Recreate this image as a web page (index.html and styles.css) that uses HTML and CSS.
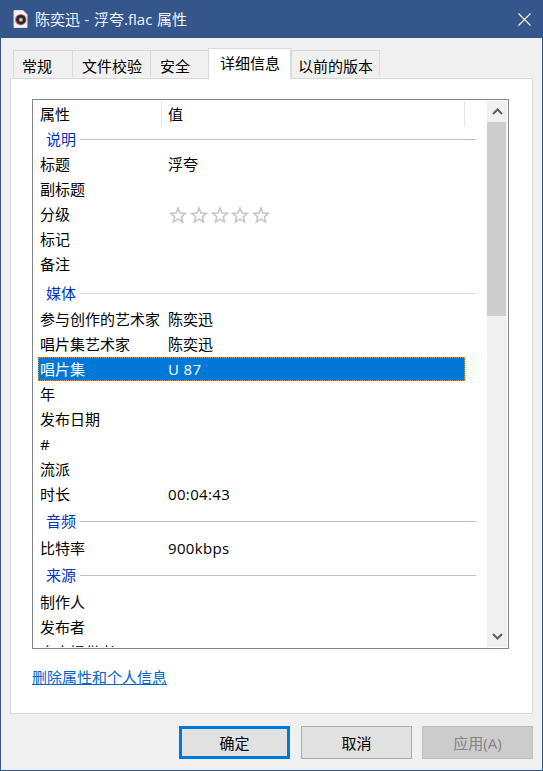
FILE: index.html
```html
<!DOCTYPE html>
<html lang="zh">
<head>
    <meta charset="utf-8">
    <title>陈奕迅 - 浮夸.flac 属性</title>
    <link rel="stylesheet" href="styles.css">
</head>
<body>
    <div class="window">
        <div class="titlebar">
            <svg class="file-icon" width="16" height="18" viewBox="0 0 16 18">
                <path d="M1 .5h9l4 4v13H1z" fill="#f6f6f6" stroke="#d8dce4"/>
                <circle cx="7.7" cy="9.7" r="5.8" fill="#d8735a"/>
                <circle cx="7.9" cy="9.7" r="4.8" fill="#2b2530"/>
                <circle cx="7.9" cy="9.7" r="2.2" fill="#8d8a90"/>
                <circle cx="7.9" cy="9.7" r="1" fill="#f2f2f2"/>
            </svg>
            <span class="title">陈奕迅 - 浮夸.flac 属性</span>
            <svg class="close-icon" width="13" height="13" viewBox="0 0 13 13">
                <path d="M.5.5l12 12M12.5.5l-12 12" stroke="#fff" stroke-width="1.1" fill="none"/>
            </svg>
        </div>

        <div class="body">
            <div class="tabs">
                <div class="tab tab-1">常规</div>
                <div class="tab tab-2">文件校验</div>
                <div class="tab tab-3">安全</div>
                <div class="tab tab-active">详细信息</div>
                <div class="tab tab-5">以前的版本</div>
            </div>

            <div class="panel">
                <div class="listbox">
                    <div class="list">
                        <div class="list-head">
                            <div class="head-name">属性</div>
                            <div class="head-value">值</div>
                        </div>

                        <div class="group group-first"><span>说明</span><i></i></div>
                        <div class="row"><div class="name">标题</div><div class="value">浮夸</div></div>
                        <div class="row"><div class="name">副标题</div></div>
                        <div class="row">
                            <div class="name">分级</div>
                            <div class="stars">
                                <svg width="18" height="18" viewBox="0 0 18 18"><path class="star" d="M9 2l2 5 5.3.4-4 3.4 1.3 5.2L9 13.2l-4.6 2.8 1.3-5.2-4-3.4L7 7z"/></svg>
                                <svg width="18" height="18" viewBox="0 0 18 18"><path class="star" d="M9 2l2 5 5.3.4-4 3.4 1.3 5.2L9 13.2l-4.6 2.8 1.3-5.2-4-3.4L7 7z"/></svg>
                                <svg width="18" height="18" viewBox="0 0 18 18"><path class="star" d="M9 2l2 5 5.3.4-4 3.4 1.3 5.2L9 13.2l-4.6 2.8 1.3-5.2-4-3.4L7 7z"/></svg>
                                <svg width="18" height="18" viewBox="0 0 18 18"><path class="star" d="M9 2l2 5 5.3.4-4 3.4 1.3 5.2L9 13.2l-4.6 2.8 1.3-5.2-4-3.4L7 7z"/></svg>
                                <svg width="18" height="18" viewBox="0 0 18 18"><path class="star" d="M9 2l2 5 5.3.4-4 3.4 1.3 5.2L9 13.2l-4.6 2.8 1.3-5.2-4-3.4L7 7z"/></svg>
                            </div>
                        </div>
                        <div class="row"><div class="name">标记</div></div>
                        <div class="row"><div class="name">备注</div></div>

                        <div class="group group-media"><span>媒体</span><i></i></div>
                        <div class="row"><div class="name">参与创作的艺术家</div><div class="value">陈奕迅</div></div>
                        <div class="row"><div class="name">唱片集艺术家</div><div class="value">陈奕迅</div></div>
                        <div class="row row-selected"><div class="name">唱片集</div><div class="value value-latin">U 87</div></div>
                        <div class="row"><div class="name">年</div></div>
                        <div class="row"><div class="name">发布日期</div></div>
                        <div class="row"><div class="name">#</div></div>
                        <div class="row"><div class="name">流派</div></div>
                        <div class="row"><div class="name">时长</div><div class="value value-latin">00:04:43</div></div>

                        <div class="group"><span>音频</span><i></i></div>
                        <div class="row"><div class="name">比特率</div><div class="value value-latin">900kbps</div></div>

                        <div class="group"><span>来源</span><i></i></div>
                        <div class="row"><div class="name">制作人</div></div>
                        <div class="row"><div class="name">发布者</div></div>
                        <div class="row"><div class="name">内容提供者</div></div>
                    </div>

                    <div class="scrollbar">
                        <div class="arrow arrow-up">
                            <svg width="11" height="7" viewBox="0 0 11 7"><path d="M1 6l4.5-4.5L10 6" stroke="#606060" stroke-width="2" fill="none"/></svg>
                        </div>
                        <div class="thumb"></div>
                        <div class="track"></div>
                        <div class="arrow arrow-down">
                            <svg width="11" height="7" viewBox="0 0 11 7"><path d="M1 1l4.5 4.5L10 1" stroke="#606060" stroke-width="2" fill="none"/></svg>
                        </div>
                    </div>
                </div>

                <a class="remove-link" href="#">删除属性和个人信息</a>
            </div>

            <div class="buttons">
                <button class="btn btn-default">确定</button>
                <button class="btn">取消</button>
                <button class="btn btn-disabled">应用(A)</button>
            </div>
        </div>
    </div>
</body>
</html>
```

FILE: styles.css
```css
* {
    box-sizing: border-box;
}

html, body {
    margin: 0;
    height: 100%;
    overflow: hidden;
}

body {
    font-family: "Open Sans", "Noto Sans CJK SC", sans-serif;
    font-size: 15px;
    color: #000;
}

.window {
    width: 543px;
    height: 771px;
    display: flex;
    flex-direction: column;
    border: 1px solid #34568b;
    border-top: 0;
    background: #f0f0f0;
}

.titlebar {
    height: 38px;
    flex: none;
    display: flex;
    align-items: center;
    padding: 0 11px 0 12px;
    background: #34568b;
    color: #fff;
}

.file-icon {
    margin-right: 6px;
}

.title {
    flex: 1;
    color: #f2f5f9;
    line-height: 38px;
    word-spacing: 0.7px;
}

.body {
    flex: 1;
    display: flex;
    flex-direction: column;
    padding: 10px 9px 0 9px;
}

.tabs {
    display: flex;
    align-items: flex-end;
    height: 30px;
    padding-left: 3px;
    position: relative;
    z-index: 1;
}

.tab {
    height: 27px;
    border: 1px solid #d9d9d9;
    border-right: 0;
    border-bottom: 0;
    background: #f0f0f0;
    line-height: 30px;
    padding-left: 9px;
    margin-bottom: 1px;
}

.tab-1 { width: 59px; padding-left: 8px; }
.tab-2 { width: 78px; }
.tab-3 { width: 58px; }
.tab-5 { width: 89px; padding-left: 6px; border-right: 1px solid #d9d9d9; }

.tab-active {
    width: 83px;
    height: 31px;
    margin-bottom: -1px;
    padding-left: 11px;
    background: #fff;
    border-right: 1px solid #d9d9d9;
    line-height: 29px;
}

.panel {
    height: 636px;
    flex: none;
    background: #fff;
    border: 1px solid #d9d9d9;
    padding: 20px 21px 0 21px;
}

.listbox {
    width: 477px;
    height: 550px;
    display: flex;
    border: 1px solid #828790;
    padding: 1px;
    background: #fff;
}

.list {
    flex: 1;
    overflow: hidden;
    padding-left: 4px;
    padding-right: 20px;
}

.list-head {
    display: flex;
    height: 26px;
    line-height: 26px;
}

.head-name {
    width: 124px;
    padding-left: 2px;
    border-right: 1px solid #e5e5e5;
}

.head-value {
    width: 303px;
    padding-left: 6px;
    border-right: 1px solid #e5e5e5;
}

.row {
    display: flex;
    width: 427px;
    height: 25px;
    line-height: 25px;
    padding-left: 2px;
}

.name {
    width: 128px;
    flex: none;
    white-space: nowrap;
}

.value-latin {
    letter-spacing: 0.35px;
}

.stars {
    display: flex;
    gap: 2.8px;
    align-items: center;
    height: 25px;
    margin-left: 1px;
}

.star {
    fill: #fff;
    stroke: #c4c4c4;
    stroke-width: 1.5;
}

.row-selected {
    height: 24px;
    margin: 0 0 1px;
    line-height: 23px;
    padding-left: 1px;
    background: #0078d7;
    color: #fff;
    border: 1px dotted #f0902a;
}

.group {
    display: flex;
    align-items: center;
    width: 438px;
    height: 29px;
    padding-left: 8px;
    color: #0033bc;
}

.group span {
    margin-right: 4px;
    line-height: 23px;
}

.group i {
    flex: 1;
    height: 1px;
    background: #b4c2e0;
}

.group-first {
    height: 25px;
}

.group-media {
    height: 30px;
    padding-top: 2px;
}

.group-media i {
    background: #d5deee;
}

.scrollbar {
    width: 20px;
    flex: none;
    display: flex;
    flex-direction: column;
    background: #f0f0f0;
}

.arrow {
    height: 21px;
    flex: none;
    display: flex;
    align-items: center;
    justify-content: center;
}

.thumb {
    height: 194px;
    flex: none;
    margin-right: 1px;
    background: #cdcdcd;
}

.track {
    flex: 1;
}

.remove-link {
    display: inline-block;
    margin-top: 17px;
    color: #0066cc;
    line-height: 22px;
}

.buttons {
    display: flex;
    justify-content: flex-end;
    gap: 10px;
    padding-top: 12px;
}

.btn {
    width: 111px;
    height: 33px;
    margin: 0;
    padding: 0;
    font-family: inherit;
    font-size: 15px;
    color: #000;
    background: #e1e1e1;
    border: 1px solid #adadad;
}

.btn-default {
    margin-right: 1px;
    border: 3px solid #0078d7;
}

.btn-disabled {
    background: #cccccc;
    border-color: #bfbfbf;
    color: #838383;
}
```
